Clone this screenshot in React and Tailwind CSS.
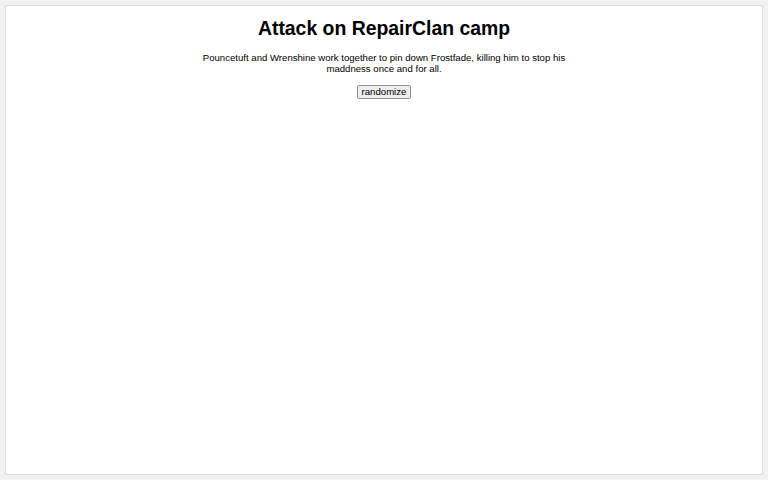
// Event card with a randomize button
import { useState } from "react";

const events = [
  "Pouncetuft and Wrenshine work together to pin down Frostfade, killing him to stop his maddness once and for all.",
];

export default function App() {
  const [idx, setIdx] = useState(0);

  return (
    <div className="h-[480px] w-[768px] bg-[#f1f1f1] p-[5px] font-['Liberation_Sans',Arial,sans-serif] text-black">
      <div className="flex h-full flex-col items-center border border-[#dcdcdc] bg-white pt-[10px]">
        <h1 className="text-[19.4px] font-bold leading-[24px]">Attack on RepairClan camp</h1>
        <p className="mt-[12px] w-[366px] text-center text-[9.6px] leading-[11px]">{events[idx]}</p>
        <button
          onClick={() => setIdx((i) => (i + 1) % events.length)}
          className="mt-[11px] rounded-[2px] border border-[#8f8f8f] bg-[#efefef] px-[4px] text-[9.6px] leading-[12px]"
        >
          randomize
        </button>
      </div>
    </div>
  );
}
